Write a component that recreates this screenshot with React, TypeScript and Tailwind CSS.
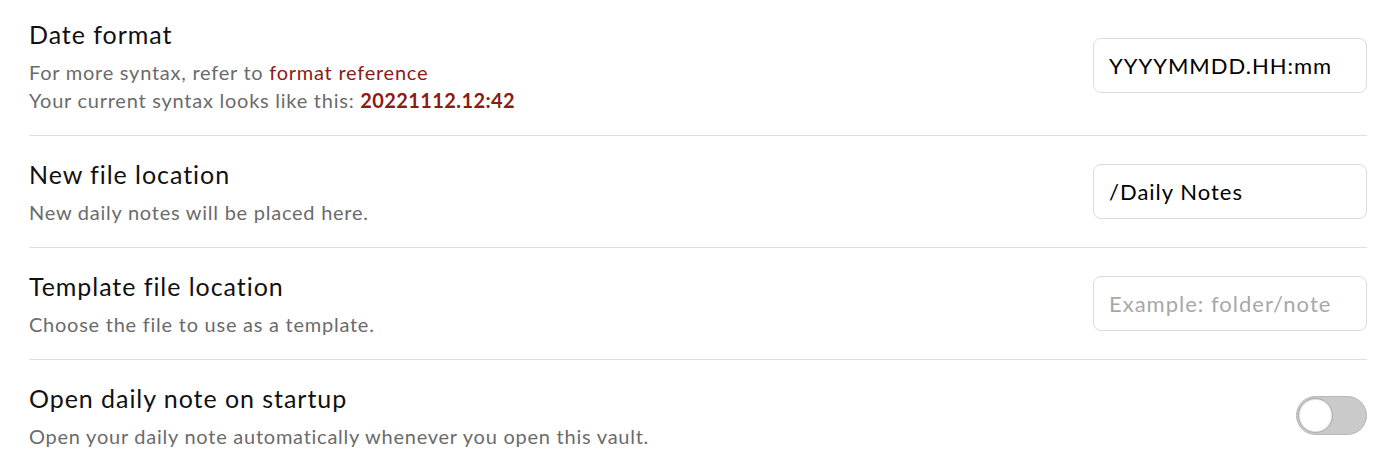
import { useState } from "react";

const font = { fontFamily: "Lato, 'Noto Sans', sans-serif" };

function Toggle() {
  const [on, setOn] = useState(false);
  return (
    <button
      onClick={() => setOn(!on)}
      className={`relative h-[39px] w-[71px] shrink-0 rounded-full border border-[#b8b8b8] ${
        on ? "bg-[#8a1c14]" : "bg-[#cacaca]"
      }`}
    >
      <span
        className={`absolute top-[1px] h-[35px] w-[35px] rounded-full border border-[#a8a8a8] bg-white shadow-[inset_0_0_0_1px_#e6e6e6] ${
          on ? "left-[33px]" : "left-[1px]"
        }`}
      />
    </button>
  );
}

function TextInput({ value, placeholder }: { value?: string; placeholder?: string }) {
  return (
    <input
      defaultValue={value}
      placeholder={placeholder}
      style={font}
      className="h-[55px] w-[274px] shrink-0 rounded-[8px] border border-[#dcdcdc] bg-white pl-[15px] text-[22px] tracking-[1px] text-black outline-none placeholder:text-[#a8a8a8]"
    />
  );
}

function Row({
  title,
  children,
  control,
  first,
}: {
  title: string;
  children: React.ReactNode;
  control: React.ReactNode;
  first?: boolean;
}) {
  return (
    <div
      className={`flex items-center justify-between border-b border-[#e0e0e0] pb-[21px] last:border-b-0 ${
        first ? "pt-[17px]" : "pt-[21px]"
      }`}
    >
      <div>
        <div className="text-[25px] leading-[34px] tracking-[0.95px] text-[#111]">{title}</div>
        <div className="mt-[7px] text-[20px] leading-[28px] tracking-[0.75px] text-[#6b6b6b]">
          {children}
        </div>
      </div>
      {control}
    </div>
  );
}

export default function App() {
  return (
    <div style={font} className="h-[476px] w-[1380px] bg-white pl-[29px] pr-[13px]">
      <Row
        first
        title="Date format"
        control={<TextInput value="YYYYMMDD.HH:mm" />}
      >
        For more syntax, refer to{" "}
        <span className="text-[#8a1c14]">format reference</span>
        <br />
        Your current syntax looks like this:{" "}
        <span className="font-bold tracking-[0.4px] text-[#8a1c14]">20221112.12:42</span>
      </Row>
      <Row title="New file location" control={<TextInput value="/Daily Notes" />}>
        New daily notes will be placed here.
      </Row>
      <Row
        title="Template file location"
        control={<TextInput placeholder="Example: folder/note" />}
      >
        Choose the file to use as a template.
      </Row>
      <Row title="Open daily note on startup" control={<Toggle />}>
        Open your daily note automatically whenever you open this vault.
      </Row>
    </div>
  );
}
